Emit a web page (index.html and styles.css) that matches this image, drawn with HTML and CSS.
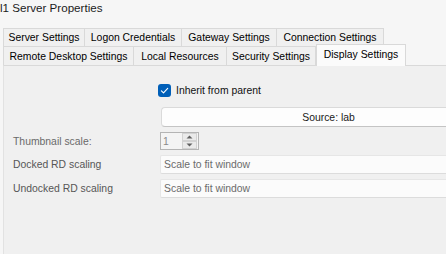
FILE: index.html
```html
<!DOCTYPE html>
<html>
<head>
<meta charset="utf-8">
<link rel="stylesheet" href="styles.css">
</head>
<body>
<div class="window">
  <div class="title">l1 Server Properties</div>
  <div class="tabs">
    <div class="tab-row">
      <div class="tab w-server">Server Settings</div>
      <div class="tab w-logon">Logon Credentials</div>
      <div class="tab w-gateway">Gateway Settings</div>
      <div class="tab w-conn">Connection Settings</div>
    </div>
    <div class="tab-row row2">
      <div class="tab w-remote">Remote Desktop Settings</div>
      <div class="tab w-local">Local Resources</div>
      <div class="tab w-security">Security Settings</div>
      <div class="tab selected w-display">Display Settings</div>
    </div>
  </div>
  <div class="page">
    <div class="row row-check">
      <span class="checkbox">
        <svg width="13" height="13" viewBox="0 0 13 13"><path d="M3.4 6.9 L5.5 8.9 L9.7 4.4" fill="none" stroke="#ffffff" stroke-width="1.1" stroke-linecap="round" stroke-linejoin="round"/></svg>
      </span>
      <span class="check-label">Inherit from parent</span>
    </div>
    <div class="row row-button">
      <div class="source-btn">Source: lab</div>
    </div>
    <div class="row row-spin">
      <span class="label">Thumbnail scale:</span>
      <div class="spin">
        <span class="spin-value">1</span>
        <div class="spin-buttons">
          <span class="spin-btn"><svg width="7" height="4" viewBox="0 0 7 4"><path d="M0.5 3.5 L3.5 0.5 L6.5 3.5 Z" fill="#606060"/></svg></span>
          <span class="spin-btn"><svg width="7" height="4" viewBox="0 0 7 4"><path d="M0.5 0.5 L3.5 3.5 L6.5 0.5 Z" fill="#606060"/></svg></span>
        </div>
      </div>
    </div>
    <div class="row row-field">
      <span class="label">Docked RD scaling</span>
      <div class="field">Scale to fit window</div>
    </div>
    <div class="row row-field">
      <span class="label">Undocked RD scaling</span>
      <div class="field">Scale to fit window</div>
    </div>
  </div>
</div>
</body>
</html>
```

FILE: styles.css
```css
html, body {
  margin: 0;
  padding: 0;
}
body {
  width: 446px;
  height: 254px;
  overflow: hidden;
  background: #f6f6f6;
  font-family: "Segoe UI", "Liberation Sans", Arial, sans-serif;
  font-size: 10.4px;
  color: #111111;
}
.window {
  display: flex;
  flex-direction: column;
  height: 254px;
}
.title {
  height: 28px;
  line-height: 16px;
  font-size: 11.6px;
  color: #1b1b1b;
  white-space: nowrap;
}
.tabs {
  display: flex;
  flex-direction: column;
  padding-left: 3px;
}
.tab-row {
  display: flex;
  height: 18px;
}
.tab-row.row2 {
  height: 19px;
}
.tab {
  box-sizing: border-box;
  border: 1px solid #d9d9d9;
  border-bottom: none;
  background: #f0f0f0;
  margin-right: -1px;
  display: flex;
  align-items: center;
  justify-content: center;
  white-space: nowrap;
  color: #000000;
}
.tab.selected {
  position: relative;
  z-index: 2;
  background: #fbfbfb;
  margin-top: -2px;
  height: 22px;
  margin-left: 1px;
  padding-bottom: 3px;
}
.w-server { width: 82px; }
.w-logon { width: 98px; }
.w-gateway { width: 96px; }
.w-conn { width: 108px; }
.w-remote { width: 131px; }
.w-local { width: 94px; }
.w-security { width: 90px; }
.w-display { width: 90px; }

.page {
  flex: 1;
  margin-left: 3px;
  border-top: 1px solid #d9d9d9;
  border-left: 1px solid #e2e2e2;
  background: #f0f0f0;
  padding: 16px 0 0 9px;
  display: flex;
  flex-direction: column;
}
.row {
  display: flex;
  align-items: center;
  white-space: nowrap;
}
.row-check {
  height: 17px;
  padding-left: 145px;
}
.checkbox {
  width: 13px;
  height: 13px;
  border-radius: 3px;
  background: #005fb8;
  display: flex;
}
.check-label {
  margin-left: 5px;
  color: #111111;
}
.row-button {
  margin-top: 8px;
  padding-left: 148px;
}
.source-btn {
  box-sizing: border-box;
  flex: 1;
  height: 20px;
  background: #fdfdfd;
  border: 1px solid #dadada;
  border-right: none;
  border-bottom-color: #c4c4c4;
  border-radius: 4px 0 0 4px;
  padding-left: 49px;
  display: flex;
  align-items: center;
  justify-content: center;
  color: #1a1a1a;
}
.label {
  width: 147px;
  flex-shrink: 0;
  color: #565656;
}
.row-spin {
  margin-top: 5px;
  height: 18px;
}
.row-spin .label {
  color: #6a6a6a;
}
.spin {
  box-sizing: border-box;
  width: 39px;
  height: 18px;
  border: 1px solid #b4b4b4;
  background: #f4f4f4;
  display: flex;
  align-items: center;
  justify-content: space-between;
}
.spin-value {
  padding-left: 2px;
  color: #8a8a8a;
}
.spin-buttons {
  display: flex;
  flex-direction: column;
  height: 16px;
  margin-right: 1px;
}
.spin-btn {
  box-sizing: border-box;
  width: 15px;
  height: 8px;
  border: 1px solid #d2d2d2;
  background: #eaeaea;
  display: flex;
  align-items: center;
  justify-content: center;
}
.row-field {
  margin-top: 5px;
  height: 19px;
}
.field {
  box-sizing: border-box;
  flex: 1;
  height: 19px;
  background: #fbfbfb;
  border: 1px solid #e6e6e6;
  border-right: none;
  border-bottom-color: #dcdcdc;
  border-radius: 2px 0 0 2px;
  padding-left: 3px;
  display: flex;
  align-items: center;
  color: #6b6b6b;
}
```
